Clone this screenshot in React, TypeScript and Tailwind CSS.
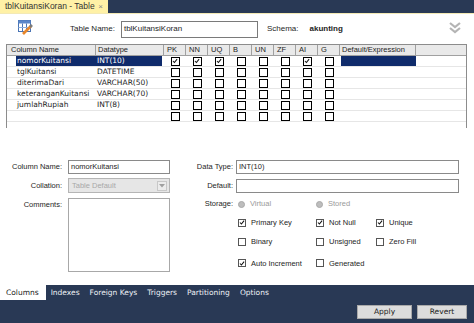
import React from "react";

const rows = [
  { name: "nomorKuitansi", type: "INT(10)", checks: [1, 1, 1, 0, 0, 0, 1, 0], sel: true },
  { name: "tglKuitansi", type: "DATETIME", checks: [0, 0, 0, 0, 0, 0, 0, 0] },
  { name: "diterimaDari", type: "VARCHAR(50)", checks: [0, 0, 0, 0, 0, 0, 0, 0] },
  { name: "keteranganKuitansi", type: "VARCHAR(70)", checks: [0, 0, 0, 0, 0, 0, 0, 0] },
  { name: "jumlahRupiah", type: "INT(8)", checks: [0, 0, 0, 0, 0, 0, 0, 0] },
  { name: "", type: "", checks: [0, 0, 0, 0, 0, 0, 0, 0] },
];

const flags = ["PK", "NN", "UQ", "B", "UN", "ZF", "AI", "G"];
const tabs = ["Indexes", "Foreign Keys", "Triggers", "Partitioning", "Options"];

const cols = "grid grid-cols-[89px_68px_22px_22px_22px_22px_22px_22px_22px_22px_76px_1fr]";

function Tick({ size = 8 }: { size?: number }) {
  return (
    <svg width={size} height={size} viewBox="0 0 8 8" className="block">
      <polyline points="1.3,4 3.2,6 6.8,1.6" fill="none" stroke="#111" strokeWidth="1.4" />
    </svg>
  );
}

function GridBox({ on }: { on: boolean }) {
  return (
    <div className="w-[9px] h-[9px] border-[1.5px] border-black bg-white flex items-center justify-center">
      {on && <Tick size={6} />}
    </div>
  );
}

function FormCheck({ on, label }: { on: boolean; label: string }) {
  return (
    <div className="flex items-center gap-[5px]">
      <div className="w-[8px] h-[8px] border border-[#555] bg-white flex items-center justify-center">
        {on && <Tick size={7} />}
      </div>
      <span>{label}</span>
    </div>
  );
}

function Radio({ label }: { label: string }) {
  return (
    <div className="flex items-center gap-[5px] text-[#9a9a9a]">
      <div className="w-[7px] h-[7px] rounded-full bg-[#bdbdbd] border border-[#a8a8a8]" />
      <span>{label}</span>
    </div>
  );
}

function TableIcon() {
  return (
    <svg width="17" height="17" viewBox="0 0 17 17">
      <rect x="1.5" y="1.5" width="12" height="11" fill="#fff" stroke="#4a74b4" />
      <rect x="1.5" y="1.5" width="12" height="3" fill="#5b86c9" />
      <line x1="5.5" y1="4.5" x2="5.5" y2="12.5" stroke="#4a74b4" />
      <line x1="9.5" y1="4.5" x2="9.5" y2="12.5" stroke="#4a74b4" />
      <line x1="1.5" y1="8.5" x2="13.5" y2="8.5" stroke="#8fb0de" />
      <line x1="6" y1="15" x2="14" y2="7" stroke="#e8862a" strokeWidth="2.6" />
      <line x1="13" y1="8" x2="15" y2="6" stroke="#7c7c7c" strokeWidth="2.6" />
    </svg>
  );
}

export default function App() {
  return (
    <div className="w-[474px] h-[323px] bg-[#293955] flex flex-col overflow-hidden whitespace-nowrap font-['Liberation_Sans',sans-serif] text-[7.5px] text-[#1e1e1e]">
      {/* document tab */}
      <div className="h-[13px] flex">
        <div className="w-[108px] bg-[#fff1a6] flex items-center pl-[5px] text-[8.5px] text-[#333] font-normal">
          <span>tblKuitansiKoran - Table</span>
          <span className="ml-auto mr-[5px] text-[#8a8a8a] text-[8px]">×</span>
        </div>
      </div>
      <div className="h-[1px] bg-[#f3e9b5]" />

      {/* editor panel */}
      <div className="h-[271px] bg-white flex flex-col">
        <div className="h-[30px] flex items-center pl-[17px] pr-[12px]">
          <div className="-mt-[3px]">
            <TableIcon />
          </div>
          <span className="ml-[36px] text-[8px]">Table Name:</span>
          <div className="ml-[6px] w-[137px] h-[17px] border border-[#7a7a7a] flex items-center px-[2px] text-[8px]">
            tblKuitansiKoran
          </div>
          <span className="ml-[9px] text-[8px]">Schema:</span>
          <span className="ml-[11px] text-[8px] font-bold">akunting</span>
          <svg width="14" height="14" viewBox="0 0 14 14" className="ml-auto -mt-[2px]">
            <polyline points="2,2 7,6 12,2" fill="none" stroke="#b4b4b4" strokeWidth="2.2" />
            <polyline points="2,7 7,11 12,7" fill="none" stroke="#b4b4b4" strokeWidth="2.2" />
          </svg>
        </div>

        {/* columns grid */}
        <div className="ml-[6px] w-[461px] h-[84px] border-t border-l border-r border-[#8c8c8c] font-['DejaVu_Sans',sans-serif]">
          <div className={`${cols} h-[11px] bg-[#e9e9e9] border-b border-[#a0a0a0] font-['Liberation_Sans',sans-serif] text-[7.5px]`}>
            <div className="pl-[4px] border-r border-[#a0a0a0] leading-[10px]">Column Name</div>
            <div className="pl-[2px] border-r border-[#a0a0a0] leading-[10px]">Datatype</div>
            {flags.map((f) => (
              <div key={f} className="pl-[3px] border-r border-[#a0a0a0] leading-[10px]">
                {f}
              </div>
            ))}
            <div className="pl-[2px] border-r border-[#a0a0a0] leading-[10px]">Default/Expression</div>
            <div />
          </div>
          {rows.map((r, i) => (
            <div key={i} className={`${cols} h-[11px] border-b border-[#e6e6e6] text-[7.5px]`}>
              <div className="pl-[9px]">
                <div className={`h-full pl-[1px] leading-[10px] ${r.sel ? "bg-[#0f2b6b] text-white" : ""}`}>{r.name}</div>
              </div>
              <div className={`pl-[1px] mr-[2px] leading-[10px] ${r.sel ? "bg-[#0f2b6b] text-white" : ""}`}>{r.type}</div>
              {r.checks.map((c, j) => (
                <div key={j} className="flex items-center justify-center">
                  <GridBox on={c === 1} />
                </div>
              ))}
              <div className={`ml-[1px] ${r.sel ? "bg-[#0f2b6b]" : ""}`} />
              <div />
            </div>
          ))}
        </div>

        {/* column details */}
        <div className="mt-[32px] flex text-[7.5px]">
          <div className="w-[180px] flex flex-col">
            <div className="flex items-center h-[14px]">
              <span className="w-[62px] text-right">Column Name:</span>
              <div className="ml-[6px] w-[102px] h-[14px] border border-[#8a8a8a] flex items-center px-[2px]">nomorKuitansi</div>
            </div>
            <div className="flex items-center h-[15px] mt-[4px]">
              <span className="w-[62px] text-right">Collation:</span>
              <div className="ml-[6px] w-[102px] h-[15px] border border-[#b5b5b5] bg-[#e6e6e6] flex items-center pl-[3px] pr-[2px] text-[#a8a8a8]">
                <span className="flex-1">Table Default</span>
                <div className="w-[10px] h-[10px] border border-[#c8c8c8] bg-[#ececec] flex items-center justify-center">
                  <svg width="6" height="4" viewBox="0 0 6 4">
                    <polygon points="0,0 6,0 3,3.5" fill="#a0a0a0" />
                  </svg>
                </div>
              </div>
            </div>
            <div className="flex items-start mt-[5px]">
              <span className="w-[62px] text-right mt-[1px]">Comments:</span>
              <div className="ml-[6px] w-[102px] h-[74px] border border-[#a8a8a8]" />
            </div>
          </div>

          <div className="flex flex-col">
            <div className="flex items-center h-[14px]">
              <span className="w-[53px] text-right">Data Type:</span>
              <div className="ml-[3px] w-[223px] h-[14px] border border-[#8a8a8a] flex items-center px-[2px]">INT(10)</div>
            </div>
            <div className="flex items-center h-[15px] mt-[4px]">
              <span className="w-[53px] text-right">Default:</span>
              <div className="ml-[3px] w-[223px] h-[14px] border border-[#8a8a8a]" />
            </div>
            <div className="flex items-center h-[10px] mt-[6px]">
              <span className="w-[53px] text-right">Storage:</span>
              <div className="ml-[5px] w-[78px]">
                <Radio label="Virtual" />
              </div>
              <Radio label="Stored" />
            </div>
            <div className="ml-[58px] grid grid-cols-[78px_60px_80px] gap-y-[8px] mt-[8px]">
              <FormCheck on label="Primary Key" />
              <FormCheck on label="Not Null" />
              <FormCheck on label="Unique" />
              <FormCheck on={false} label="Binary" />
              <FormCheck on={false} label="Unsigned" />
              <FormCheck on={false} label="Zero Fill" />
            </div>
            <div className="ml-[58px] grid grid-cols-[78px_60px] mt-[10px]">
              <FormCheck on label="Auto Increment" />
              <FormCheck on={false} label="Generated" />
            </div>
          </div>
        </div>
      </div>

      {/* bottom tabs */}
      <div className="h-[15px] flex font-['DejaVu_Sans',sans-serif] text-[7.5px]">
        <div className="bg-white pl-[6px] pr-[7px] flex items-center text-[#222]">Columns</div>
        {tabs.map((t) => (
          <div key={t} className="px-[5px] flex items-center text-[#eef1f6]">
            {t}
          </div>
        ))}
      </div>

      <div className="flex-1 flex items-center justify-end gap-[5px] pr-[7px] font-['DejaVu_Sans',sans-serif] text-[7.5px]">
        <button className="w-[55px] h-[14px] bg-[#dcdcdc] border border-[#a9a9a9] text-[#222]">Apply</button>
        <button className="w-[50px] h-[14px] bg-[#dcdcdc] border border-[#a9a9a9] text-[#222]">Revert</button>
      </div>
    </div>
  );
}
